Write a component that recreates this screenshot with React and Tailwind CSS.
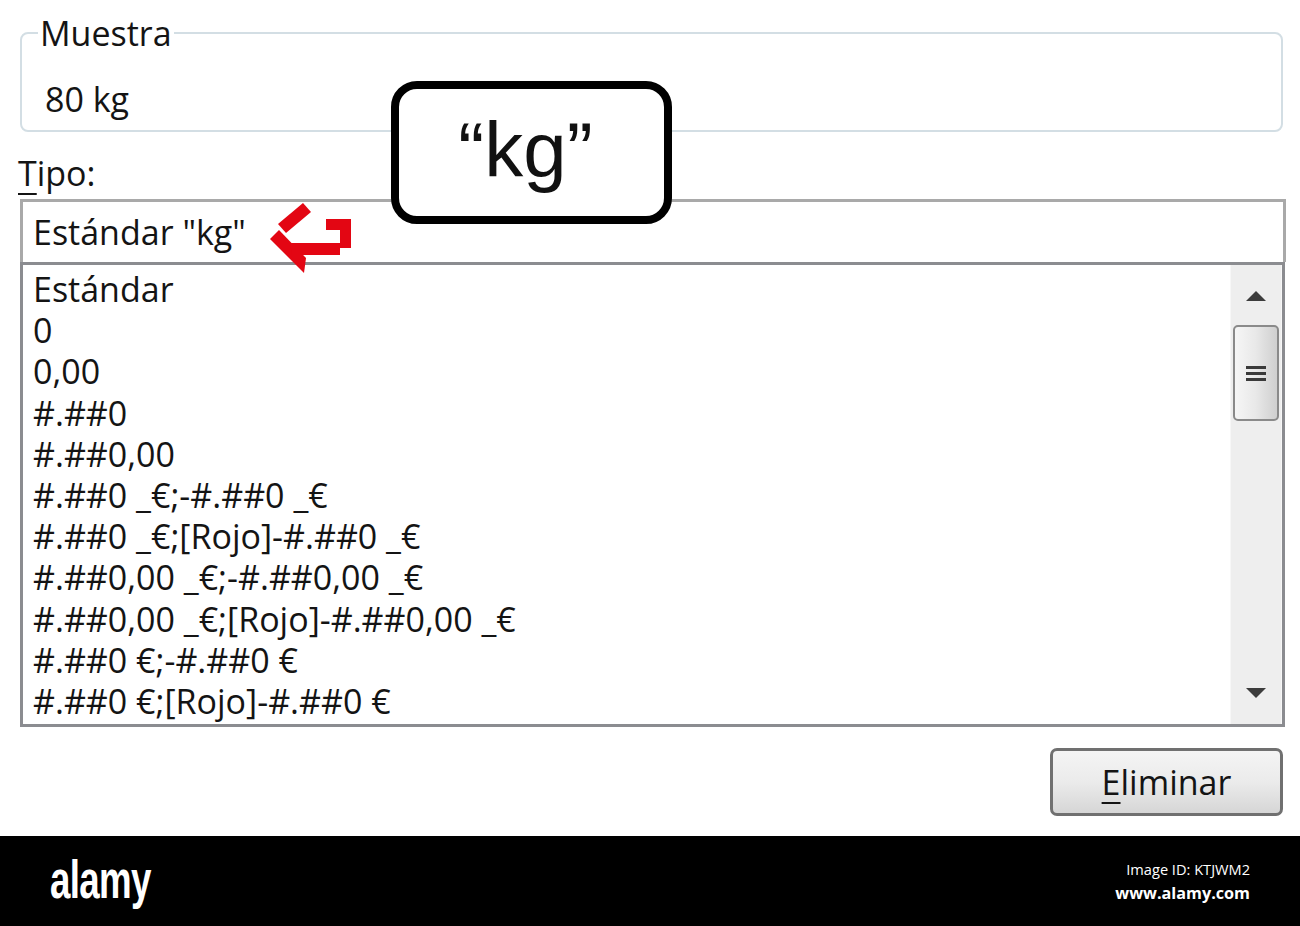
import React from 'react';

const formats = [
  'Estándar',
  '0',
  '0,00',
  '#.##0',
  '#.##0,00',
  '#.##0 _€;-#.##0 _€',
  '#.##0 _€;[Rojo]-#.##0 _€',
  '#.##0,00 _€;-#.##0,00 _€',
  '#.##0,00 _€;[Rojo]-#.##0,00 _€',
  '#.##0 €;-#.##0 €',
  '#.##0 €;[Rojo]-#.##0 €',
];

const ScrollBar = () => (
  <div className="w-[52px] h-full bg-[#eeeeee] border-x border-[#f7f7f7] flex flex-col items-center py-[2px]">
    <div className="h-[58px] w-full flex items-center justify-center">
      <svg width="20" height="10" viewBox="0 0 20 10">
        <polygon points="10,0 20,10 0,10" fill="#3c3c3c" />
      </svg>
    </div>
    <div className="w-[46px] h-[96px] rounded-[5px] border-2 border-[#8a8a8a] bg-gradient-to-r from-[#f6f6f6] via-[#e8e8e8] to-[#cfcfcf] flex flex-col items-center justify-center gap-[3px]">
      <div className="w-[20px] h-[3px] bg-[#3a3a3a]" />
      <div className="w-[20px] h-[3px] bg-[#3a3a3a]" />
      <div className="w-[20px] h-[3px] bg-[#3a3a3a]" />
    </div>
    <div className="flex-1" />
    <div className="h-[58px] w-full flex items-center justify-center">
      <svg width="20" height="10" viewBox="0 0 20 10">
        <polygon points="0,0 20,0 10,10" fill="#3c3c3c" />
      </svg>
    </div>
  </div>
);

const App = () => {
  return (
    <div
      className="w-[1300px] h-[926px] bg-white flex flex-col relative overflow-hidden text-[#141414]"
      style={{ fontFamily: '"Open Sans", "Noto Sans", sans-serif' }}
    >
      <div className="flex-1 flex flex-col pl-[18px] pr-[14px] pt-[16px] text-[34px] font-medium">
        <fieldset className="ml-[2px] w-[1263px] border-2 border-[#d3dee4] rounded-[8px] pl-[23px] pt-[29px] pb-[10px]">
          <legend className="-ml-[7px] px-[2px] leading-[34px]">Muestra</legend>
          <div className="leading-[41px]">80 kg</div>
        </fieldset>

        <div className="mt-[21px] leading-[41px]">
          <span className="underline underline-offset-[7px] decoration-[2px]">T</span>ipo:
        </div>

        <div className="mt-[5px] ml-[2px] w-[1266px] h-[63px] border-[3px] border-b-0 border-[#a9a9a9] pl-[10px] flex items-center">
          Estándar "kg"
        </div>

        <div className="ml-[2px] w-[1265px] h-[465px] border-[3px] border-[#8b8c90] flex">
          <div className="flex-1 pl-[10px] pt-[4px] leading-[41.2px] overflow-hidden">
            {formats.map((f, i) => (
              <div key={i} className="whitespace-pre">{f}</div>
            ))}
          </div>
          <ScrollBar />
        </div>

        <div className="self-end mt-[21px] mr-[3px] w-[233px] h-[68px] rounded-[7px] border-[3px] border-[#707070] bg-gradient-to-b from-[#f4f4f4] via-[#ebebeb] to-[#d6d6d6] flex items-center justify-center">
          <span>
            <span className="underline underline-offset-[7px] decoration-[2px]">E</span>liminar
          </span>
        </div>
      </div>

      <div className="h-[90px] bg-black flex items-center justify-between pl-[50px] pr-[50px]">
        <span
          className="text-white font-bold text-[54px] tracking-[-1px] leading-none pb-[4px] scale-x-[0.68] origin-left"
          style={{ fontFamily: '"Liberation Sans", Arial, sans-serif' }}
        >
          alamy
        </span>
        <div className="flex flex-col items-end text-white leading-[24px]">
          <span className="text-[14.6px]">Image ID: KTJWM2</span>
          <span className="text-[16.2px] font-bold">www.alamy.com</span>
        </div>
      </div>

      <div className="absolute left-[391px] top-[81px] w-[281px] h-[143px] border-[8px] border-black rounded-[26px] bg-white flex items-center justify-center">
        <span
          className="text-[78px] leading-none text-[#111] pb-[6px] pr-[12px]"
          style={{ fontFamily: '"Liberation Sans", Arial, sans-serif' }}
        >
          “kg”
        </span>
      </div>

      <svg className="absolute left-[265px] top-[200px]" width="95" height="80" viewBox="265 200 95 80">
        <polygon points="303,203 311,212 286,233 278,224" fill="#e30613" />
        <polygon points="270,239 279,230 306,258 304,273" fill="#e30613" />
        <polygon points="290,243 340,243 340,255 292,255" fill="#e30613" />
        <polygon points="326,219 351,219 351,248 340,248 340,230 326,230" fill="#e30613" />
      </svg>
    </div>
  );
};

export default App;
